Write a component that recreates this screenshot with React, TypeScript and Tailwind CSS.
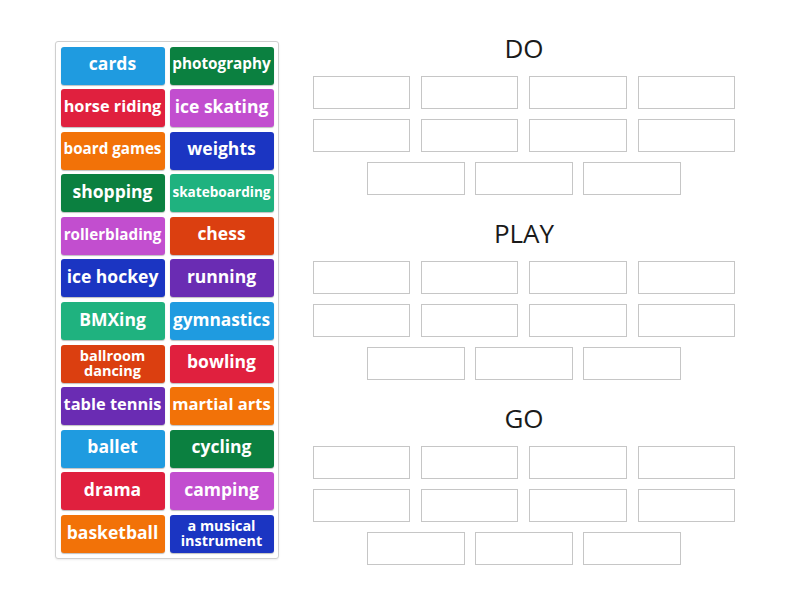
const BLUE = 'bg-[#1f9be0]';
const GREEN = 'bg-[#0b8040]';
const RED = 'bg-[#e0203e]';
const MAGENTA = 'bg-[#c24ecf]';
const ORANGE = 'bg-[#f27208]';
const NAVY = 'bg-[#1b35c2]';
const TEAL = 'bg-[#1fb27f]';
const RUST = 'bg-[#db3f10]';
const PURPLE = 'bg-[#6a2cb3]';

type Tile = { label: string; color: string; size: string; lines?: [string, string] };

const TILES: Tile[] = [
  { label: 'cards', color: BLUE, size: 'text-[17.5px]' },
  { label: 'photography', color: GREEN, size: 'text-[15.3px]' },
  { label: 'horse riding', color: RED, size: 'text-[16.3px]' },
  { label: 'ice skating', color: MAGENTA, size: 'text-[17.5px]' },
  { label: 'board games', color: ORANGE, size: 'text-[15.2px]' },
  { label: 'weights', color: NAVY, size: 'text-[17.5px]' },
  { label: 'shopping', color: GREEN, size: 'text-[17.5px]' },
  { label: 'skateboarding', color: TEAL, size: 'text-[13.6px]' },
  { label: 'rollerblading', color: MAGENTA, size: 'text-[15.2px]' },
  { label: 'chess', color: RUST, size: 'text-[17.5px]' },
  { label: 'ice hockey', color: NAVY, size: 'text-[17.5px]' },
  { label: 'running', color: PURPLE, size: 'text-[17.5px]' },
  { label: 'BMXing', color: TEAL, size: 'text-[17.5px]' },
  { label: 'gymnastics', color: BLUE, size: 'text-[17.3px]' },
  { label: 'ballroom dancing', color: RUST, size: 'text-[14.5px]', lines: ['ballroom', 'dancing'] },
  { label: 'bowling', color: RED, size: 'text-[17.5px]' },
  { label: 'table tennis', color: PURPLE, size: 'text-[16.4px]' },
  { label: 'martial arts', color: ORANGE, size: 'text-[16.6px]' },
  { label: 'ballet', color: BLUE, size: 'text-[17.5px]' },
  { label: 'cycling', color: GREEN, size: 'text-[17.5px]' },
  { label: 'drama', color: RED, size: 'text-[17.5px]' },
  { label: 'camping', color: MAGENTA, size: 'text-[17.5px]' },
  { label: 'basketball', color: ORANGE, size: 'text-[17.5px]' },
  { label: 'a musical instrument', color: NAVY, size: 'text-[14.4px]', lines: ['a musical', 'instrument'] },
];

const GROUPS = ['DO', 'PLAY', 'GO'];

function Slot() {
  return <div className="h-[32.5px] w-[97.5px] border border-[#c6c6c6] bg-white" />;
}

function Group({ title }: { title: string }) {
  return (
    <div className="flex flex-col">
      <h2 className="mb-[11.5px] text-center text-[26px] leading-[34px] font-normal text-[#1a1a1a]">{title}</h2>
      <div className="grid grid-cols-4 gap-x-[10.7px] gap-y-[10.5px]">
        {Array.from({ length: 8 }).map((_, i) => (
          <Slot key={i} />
        ))}
      </div>
      <div className="mt-[10.5px] flex justify-center gap-[10.7px]">
        {Array.from({ length: 3 }).map((_, i) => (
          <Slot key={i} />
        ))}
      </div>
    </div>
  );
}

export default function App() {
  return (
    <div className="flex h-[600px] w-[800px] items-start bg-white pl-[55px] pt-[30.5px] font-['Open_Sans',sans-serif]">
      {/* word bank */}
      <div className="mt-[10.5px] grid w-[224px] grid-cols-2 gap-x-[5px] gap-y-[4.6px] rounded-[3px] border border-[#cfcfcf] bg-white p-[4.5px] shadow-[0_1px_2px_rgba(0,0,0,0.08)]">
        {TILES.map((t) => (
          <div
            key={t.label}
            className={`flex h-[38px] items-center justify-center rounded-[3px] px-[2px] text-center font-bold text-white whitespace-nowrap shadow-[0_1px_1px_rgba(0,0,0,0.25)] ${t.color} ${t.size} ${t.lines ? 'pb-[1.5px] leading-[15px]' : 'pb-[3.5px] leading-none'}`}
          >
            {t.lines ? (
              <span>
                {t.lines[0]}
                <br />
                {t.lines[1]}
              </span>
            ) : (
              t.label
            )}
          </div>
        ))}
      </div>

      {/* drop zones */}
      <div className="ml-[33.5px] flex w-[423px] flex-col gap-[21px]">
        {GROUPS.map((g) => (
          <Group key={g} title={g} />
        ))}
      </div>
    </div>
  );
}
